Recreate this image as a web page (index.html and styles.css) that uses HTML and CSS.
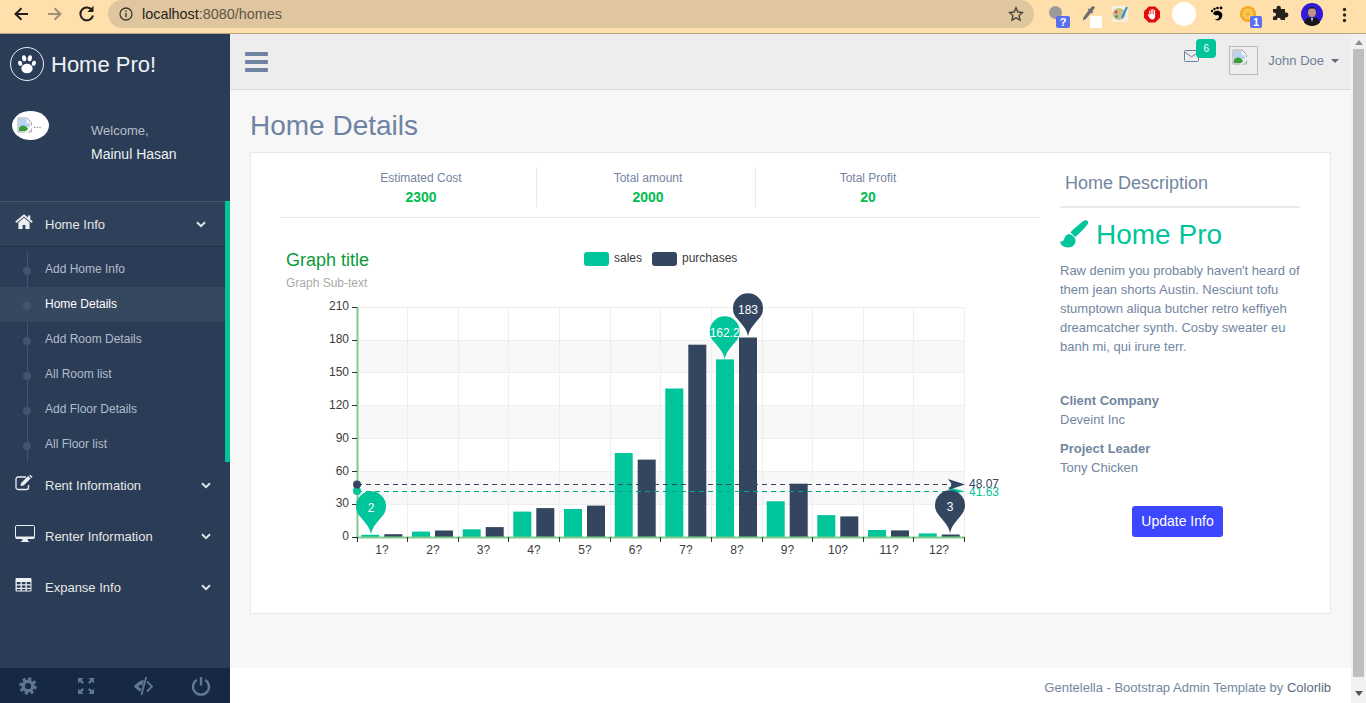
FILE: index.html
```html
<!DOCTYPE html>
<html lang="en">
<head>
<meta charset="utf-8">
<title>Home Details</title>
<link rel="stylesheet" href="styles.css">
</head>
<body>
<header class="chrome">
  <div class="chrome-nav">
    <svg class="chrome-nav-svg" viewBox="0 0 100 33" width="100" height="33">
      <path d="M28 14H16M21.5 8.2L15.5 14l6 5.8" fill="none" stroke="#231f1a" stroke-width="2"/>
      <path d="M48 14H60M54.5 8.2L60.5 14l-6 5.8" fill="none" stroke="#a08f74" stroke-width="2"/>
      <path d="M92.2 10.5A6.4 6.4 0 1 0 93 15.5" fill="none" stroke="#231f1a" stroke-width="2"/>
      <path d="M93.5 5.8V12H87.3Z" fill="#231f1a"/>
    </svg>
  </div>
  <div class="url-pill">
    <svg class="url-info" viewBox="0 0 14 14" width="14" height="14">
      <circle cx="7" cy="7" r="6" fill="none" stroke="#3d3a34" stroke-width="1.3"/>
      <rect x="6.3" y="6" width="1.4" height="4.2" fill="#3d3a34"/>
      <rect x="6.3" y="3.6" width="1.4" height="1.4" fill="#3d3a34"/>
    </svg>
    <span class="url-host">localhost</span><span class="url-rest">:8080/homes</span>
    <svg class="url-star" viewBox="0 0 16 16" width="16" height="16">
      <path d="M8 1.8l1.9 4.2 4.6.5-3.4 3.1.9 4.5L8 11.8l-4 2.3.9-4.5L1.5 6.5l4.6-.5z" fill="none" stroke="#4a453d" stroke-width="1.4"/>
    </svg>
  </div>
  <svg class="ext-svg" viewBox="1034 0 332 33" width="332" height="33">
    <circle cx="1055.5" cy="12.5" r="6.5" fill="#9a9a98"/>
    <rect x="1056" y="16" width="14" height="12" rx="2" fill="#5a6ef0"/>
    <text x="1063" y="26" class="ext-badge">?</text>
    <path d="M1095 7.5c-1-1.6-3-1.6-4 0l-1.2 1.5-1-.6-1.2 1.4 1 .8-5 6.4-.8 3.4 3-1.4 5.2-6.2 1 .8 1.3-1.4-.9-1z" fill="#6b6d70"/>
    <rect x="1090" y="16" width="12" height="12" rx="1.5" fill="#fff"/>
    <rect x="1112" y="6" width="16" height="16" fill="#f3efe2"/>
    <ellipse cx="1119" cy="14" rx="6.5" ry="6" fill="#c9bf94"/>
    <circle cx="1116" cy="12" r="1.5" fill="#d24a3a"/>
    <circle cx="1120" cy="10.5" r="1.3" fill="#e5b93b"/>
    <circle cx="1116.5" cy="16.5" r="1.4" fill="#4a9d50"/>
    <path d="M1127 7l-5 11" stroke="#2b8fd0" stroke-width="2"/>
    <path d="M1148.7 6.5h6.6l4.7 4.7v6.6l-4.7 4.7h-6.6l-4.7-4.7v-6.6z" fill="#e20e0e"/>
    <path d="M1149 11h1v3h.6V9.5h1.1V14h.6V9h1.1v5h.6V10h1.1v6.5c0 2-1.2 3-2.8 3-1.5 0-2.3-.8-3-2l-1.6-2.8 1-.5.9 1.3z" fill="#fff"/>
    <circle cx="1184" cy="14" r="12" fill="#fff"/>
    <path d="M1213 14c0-2 3-4 6-3 3 1 4 3 3 6-1 3-4 4-6 3l-1-1c2 .5 4-.5 4-2.5 0-1.5-2-2-3-1z" fill="#000"/>
    <circle cx="1212" cy="11" r="1.2" fill="#000"/><circle cx="1214.5" cy="9" r="1.2" fill="#000"/><circle cx="1217.5" cy="8" r="1.3" fill="#000"/><circle cx="1221" cy="8" r="1.4" fill="#000"/>
    <circle cx="1248" cy="14" r="8" fill="#f5a623"/>
    <circle cx="1248" cy="14" r="5.5" fill="#ffd25e"/>
    <path d="M1248 8.5v11M1242.5 14h11M1244 10l8 8M1252 10l-8 8" stroke="#f5a623" stroke-width=".8"/>
    <rect x="1250" y="16" width="12" height="12" rx="2" fill="#5a6ef0"/>
    <text x="1256" y="26" class="ext-badge">1</text>
    <path d="M1273 11h3.5v-1a2.2 2.2 0 0 1 4.4 0v1h4.1v3.6h1a2.4 2.4 0 0 1 0 4.8h-1V22h-4.4v-1a1.9 1.9 0 0 0-3.6 0v1H1273v-3.500h1a2 2 0 0 0 0-4H1273z" fill="#26221c" transform="translate(0 -2)"/>
    <circle cx="1312" cy="14" r="11" fill="#2f1bd8"/>
    <ellipse cx="1312" cy="12.5" rx="4" ry="5" fill="#c09478"/>
    <path d="M1308 10c0-4 8-4 8 0l-1-1.5h-6z" fill="#14110f"/>
    <path d="M1304 22.5c1-4 4-5 8-5s7 1 8 5a11 11 0 0 1-16 0z" fill="#15151b"/>
    <path d="M1311 18h2l-1 4z" fill="#eee"/>
    <circle cx="1344.5" cy="9.5" r="1.7" fill="#2b2620"/><circle cx="1344.5" cy="15" r="1.7" fill="#2b2620"/><circle cx="1344.5" cy="20.5" r="1.7" fill="#2b2620"/>
  </svg>
</header>

<div class="app">
  <aside class="sidebar">
    <div class="brand">
      <span class="brand-circle">
        <svg viewBox="0 0 34 34" width="26" height="26">
          <ellipse cx="17" cy="23" rx="7.4" ry="6.2" fill="#fff"/>
          <ellipse cx="8" cy="16" rx="2.6" ry="3.4" fill="#fff" transform="rotate(-20 8 16)"/>
          <ellipse cx="13.3" cy="9.5" rx="2.8" ry="3.9" fill="#fff" transform="rotate(-8 13.3 9.5)"/>
          <ellipse cx="20.7" cy="9.5" rx="2.8" ry="3.9" fill="#fff" transform="rotate(8 20.7 9.5)"/>
          <ellipse cx="26" cy="16" rx="2.6" ry="3.4" fill="#fff" transform="rotate(20 26 16)"/>
        </svg>
      </span>
      <span class="brand-name">Home Pro!</span>
    </div>
    <div class="profile">
      <div class="profile-pic">
        <svg class="broken-small" viewBox="0 0 16 16" width="16" height="16">
          <path d="M1 1h9l4.500 4.500V15H1z" fill="#f4f6f8" stroke="#a3a6ab" stroke-width="1"/>
          <path d="M2 2h7.500v4.200h3.500V10H2z" fill="#b9d2f3"/>
          <path d="M2 14V10.500c3-3 6-2.500 8 0l3 3v.5z" fill="#3a9d3a"/>
          <path d="M16 8.500L8.500 16" stroke="#fff" stroke-width="2"/>
        </svg>
        <span class="alt-dots">...</span>
      </div>
      <div class="profile-info">
        <span class="welcome">Welcome,</span>
        <span class="profile-name">Mainul Hasan</span>
      </div>
    </div>
    <nav class="menu">
      <div class="group group-open">
        <div class="menu-row menu-row-active">
          <svg class="menu-icon" viewBox="0 0 18 16" width="18" height="16">
            <path d="M3.400 8.500L9 3.800l5.600 4.700V15h-4.200v-4H7.600v4H3.400z" fill="#eceff3"/>
            <path d="M.8 8.300L9 1.500l8.200 6.800" fill="none" stroke="#eceff3" stroke-width="1.800"/>
            <rect x="13" y="1.500" width="2.300" height="4" fill="#eceff3"/>
          </svg>
          <span class="menu-label">Home Info</span>
          <svg class="chev chev-open" viewBox="0 0 10 7" width="10" height="7"><path d="M1 1.200l4 4 4-4" fill="none" stroke="#dfe4ea" stroke-width="2"/></svg>
        </div>
        <ul class="sub">
          <li class="sub-item">Add Home Info</li>
          <li class="sub-item sub-item-active">Home Details</li>
          <li class="sub-item">Add Room Details</li>
          <li class="sub-item">All Room list</li>
          <li class="sub-item">Add Floor Details</li>
          <li class="sub-item">All Floor list</li>
        </ul>
      </div>
      <div class="menu-row menu-row-plain">
        <svg class="menu-icon" viewBox="0 0 18 16" width="18" height="16">
          <path d="M13.500 10v2.500a2 2 0 0 1-2 2H3a2 2 0 0 1-2-2V4a2 2 0 0 1 2-2h8" fill="none" stroke="#eceff3" stroke-width="1.300"/>
          <path d="M5.500 11l.6-3 7-7 2.500 2.500-7 7z" fill="#eceff3"/>
          <path d="M14 .6l2.600 2.500 1-1.300L15.300 0z" fill="#eceff3"/>
        </svg>
        <span class="menu-label">Rent Information</span>
        <svg class="chev" viewBox="0 0 10 7" width="10" height="7"><path d="M1 1.200l4 4 4-4" fill="none" stroke="#dfe4ea" stroke-width="2"/></svg>
      </div>
      <div class="menu-row menu-row-plain">
        <svg class="menu-icon" viewBox="0 0 20 18" width="20" height="18">
          <rect x=".5" y=".5" width="19" height="12.500" rx="1.200" fill="none" stroke="#eceff3" stroke-width="1"/>
          <rect x=".5" y="11.500" width="19" height="2.500" rx="1" fill="#eceff3"/>
          <path d="M7.500 14h5l.5 2.200h1.300V17H5.700v-.8H7z" fill="#eceff3"/>
        </svg>
        <span class="menu-label">Renter Information</span>
        <svg class="chev" viewBox="0 0 10 7" width="10" height="7"><path d="M1 1.200l4 4 4-4" fill="none" stroke="#dfe4ea" stroke-width="2"/></svg>
      </div>
      <div class="menu-row menu-row-plain">
        <svg class="menu-icon" viewBox="0 0 18 16" width="18" height="16">
          <rect x=".5" y="1" width="16" height="13.500" rx="1" fill="#eceff3"/>
          <path d="M1.800 5h3.700v2.300H1.800zM6.800 5h3.700v2.300H6.800zM11.800 5h3.700v2.300h-3.700zM1.800 8.500h3.700v2.300H1.800zM6.800 8.500h3.700v2.300H6.800zM11.800 8.500h3.700v2.300h-3.700zM1.800 12h3.700v1.500H1.800zM6.800 12h3.700v1.500H6.800zM11.800 12h3.700v1.500h-3.700z" fill="#2a3c56"/>
        </svg>
        <span class="menu-label">Expanse Info</span>
        <svg class="chev" viewBox="0 0 10 7" width="10" height="7"><path d="M1 1.200l4 4 4-4" fill="none" stroke="#dfe4ea" stroke-width="2"/></svg>
      </div>
    </nav>
    <div class="side-footer">
      <svg viewBox="0 0 20 20" width="20" height="20">
        <circle cx="10" cy="10" r="7.400" fill="none" stroke="#5f7893" stroke-width="2.800" stroke-dasharray="3.100 2.710"/>
        <circle cx="10" cy="10" r="4.800" fill="none" stroke="#5f7893" stroke-width="3.400"/>
      </svg>
      <svg viewBox="0 0 20 20" width="20" height="20">
        <path d="M2 2h5.500L5.600 3.900 8 6.300 6.300 8 3.900 5.600 2 7.500zM18 2v5.500l-1.900-1.900L13.700 8 12 6.300l2.400-2.400L12.500 2zM2 18v-5.500l1.900 1.900L6.300 12 8 13.700l-2.400 2.400L7.500 18zM18 18h-5.500l1.900-1.900L12 13.700l1.700-1.700 2.400 2.400 1.900-1.900z" fill="#5f7893"/>
      </svg>
      <svg viewBox="0 0 20 20" width="20" height="20">
        <path d="M10 4C6 5 3 7.500 1 10.500 3 13 5 14.500 7.500 15.500L11 4.500z" fill="#5f7893"/>
        <circle cx="7.500" cy="10.500" r="1.700" fill="#162844"/>
        <path d="M13.200 1L8.400 19" fill="none" stroke="#5f7893" stroke-width="1.800"/>
        <path d="M14 5.500L19 10.500 14 15.500" fill="none" stroke="#5f7893" stroke-width="1.800"/>
      </svg>
      <svg viewBox="0 0 20 20" width="20" height="20">
        <path d="M5.700 3.900a8 8 0 1 0 8.600 0" fill="none" stroke="#5f7893" stroke-width="2.400"/>
        <path d="M10 1v8.500" stroke="#5f7893" stroke-width="2.400"/>
      </svg>
    </div>
  </aside>

  <div class="main">
    <div class="topnav">
      <div class="hamburger"><span></span><span></span><span></span></div>
      <div class="nav-right">
        <div class="mail">
          <svg viewBox="0 0 15 12" width="15" height="12">
            <rect x=".5" y=".5" width="14" height="11" rx="1" fill="none" stroke="#6b7fa3" stroke-width="1"/>
            <path d="M.8 2l6.700 5 6.700-5" fill="none" stroke="#6b7fa3" stroke-width="1"/>
          </svg>
          <span class="badge">6</span>
        </div>
        <div class="nav-avatar">
          <svg viewBox="0 0 16 16" width="16" height="16">
            <path d="M1 1h9l4.500 4.500V15H1z" fill="#f4f6f8" stroke="#a3a6ab" stroke-width="1"/>
            <path d="M2 2h7.500v4.200h3.500V10H2z" fill="#b9d2f3"/>
            <path d="M2 14V10.500c3-3 6-2.500 8 0l3 3v.5z" fill="#3a9d3a"/>
            <path d="M16 8.500L8.500 16" stroke="#ededed" stroke-width="2"/>
          </svg>
        </div>
        <span class="nav-user">John Doe</span>
        <span class="caret"></span>
      </div>
    </div>

    <div class="content">
      <h1 class="page-title">Home Details</h1>
      <section class="tile">
        <div class="tile-left">
          <div class="stats">
            <div class="stat"><span class="stat-label">Estimated Cost</span><span class="stat-value">2300</span></div>
            <div class="stat stat-mid"><span class="stat-label">Total amount</span><span class="stat-value">2000</span></div>
            <div class="stat stat-last"><span class="stat-label">Total Profit</span><span class="stat-value">20</span></div>
          </div>
          <svg class="chart" viewBox="281 218 759 360" width="759" height="360">
            <text x="286" y="265.500" class="c-title">Graph title</text>
            <text x="286" y="287" class="c-sub">Graph Sub-text</text>
            <rect x="584" y="252" width="25" height="14" rx="3" class="f-green"/>
            <text x="614" y="262" class="c-text">sales</text>
            <rect x="652" y="252" width="25" height="14" rx="3" class="f-navy"/>
            <text x="682" y="262" class="c-text">purchases</text>

            <rect x="357" y="340" width="608" height="33" class="band"/>
            <rect x="357" y="405.500" width="608" height="33" class="band"/>
            <rect x="357" y="471.500" width="608" height="33" class="band"/>
            <path class="grid" d="M357 307.500H965M357 340.500H965M357 372.500H965M357 405.500H965M357 438.500H965M357 471.500H965M357 504.500H965"/>
            <path class="grid" d="M407.500 307V537M458.500 307V537M508.500 307V537M559.500 307V537M610.500 307V537M660.500 307V537M711.500 307V537M762.500 307V537M812.500 307V537M863.500 307V537M913.500 307V537M964.500 307V537"/>

            <g class="f-green">
              <rect x="361.300" y="534.800" width="18" height="2.200"/>
              <rect x="412" y="531.600" width="18" height="5.400"/>
              <rect x="462.700" y="529.300" width="18" height="7.700"/>
              <rect x="513.300" y="511.600" width="18" height="25.400"/>
              <rect x="564" y="509" width="18" height="28"/>
              <rect x="614.700" y="453" width="18" height="84"/>
              <rect x="665.300" y="388.500" width="18" height="148.500"/>
              <rect x="716" y="359.400" width="18" height="177.600"/>
              <rect x="766.700" y="501.300" width="18" height="35.700"/>
              <rect x="817.300" y="515.100" width="18" height="21.900"/>
              <rect x="868" y="530" width="18" height="7"/>
              <rect x="918.700" y="533.400" width="18" height="3.600"/>
            </g>
            <g class="f-navy">
              <rect x="384.300" y="534.200" width="18" height="2.800"/>
              <rect x="435" y="530.500" width="18" height="6.500"/>
              <rect x="485.700" y="527.100" width="18" height="9.900"/>
              <rect x="536.300" y="508.100" width="18" height="28.900"/>
              <rect x="587" y="505.600" width="18" height="31.400"/>
              <rect x="637.700" y="459.600" width="18" height="77.400"/>
              <rect x="688.300" y="344.700" width="18" height="192.300"/>
              <rect x="739" y="337.500" width="18" height="199.500"/>
              <rect x="789.700" y="483.700" width="18" height="53.300"/>
              <rect x="840.300" y="516.400" width="18" height="20.600"/>
              <rect x="891" y="530.400" width="18" height="6.600"/>
              <rect x="941.700" y="534.500" width="18" height="2.500"/>
            </g>

            <path class="axis-green" d="M357.500 307V538M356 537.500H965"/>
            <path class="tick" d="M352 307.500h5M352 340.500h5M352 372.500h5M352 405.500h5M352 438.500h5M352 471.500h5M352 504.500h5M352 537.500h5"/>
            <path class="tick" d="M357.500 537v5M407.500 537v5M458.500 537v5M508.500 537v5M559.500 537v5M610.500 537v5M660.500 537v5M711.500 537v5M762.500 537v5M812.500 537v5M863.500 537v5M913.500 537v5M964.500 537v5"/>

            <path class="dash-navy" d="M357 484.500H955"/>
            <path class="dash-green" d="M357 491.500H955"/>
            <path class="f-green" d="M948 487l17 4.500-17 3 3-3.500z"/>
            <path class="f-navy" d="M948 479l17 5.500-17 5.500 4-5.500z"/>
            <circle cx="357" cy="491" r="4" class="f-green"/>
            <circle cx="357" cy="484.500" r="4" class="f-navy"/>

            <g class="c-text c-end">
              <text x="349" y="310">210</text>
              <text x="349" y="343">180</text>
              <text x="349" y="376">150</text>
              <text x="349" y="409">120</text>
              <text x="349" y="442">90</text>
              <text x="349" y="475">60</text>
              <text x="349" y="507">30</text>
              <text x="349" y="540">0</text>
            </g>
            <g class="c-text c-mid">
              <text x="382" y="554">1?</text>
              <text x="433" y="554">2?</text>
              <text x="483.500" y="554">3?</text>
              <text x="534" y="554">4?</text>
              <text x="585" y="554">5?</text>
              <text x="635.500" y="554">6?</text>
              <text x="686" y="554">7?</text>
              <text x="737" y="554">8?</text>
              <text x="787.500" y="554">9?</text>
              <text x="838" y="554">10?</text>
              <text x="889" y="554">11?</text>
              <text x="939" y="554">12?</text>
            </g>
            <text x="969" y="495.500" class="c-label-green">41.63</text>
            <text x="969" y="488" class="c-label-navy">48.07</text>

            <path class="f-green" transform="translate(371 506)" d="M0 29C-.5 23-4 18.500-10.500 11A15 15 0 1 1 10.500 11C4 18.500.5 23 0 29Z"/>
            <path class="f-navy" transform="translate(950 505)" d="M0 29C-.5 23-4 18.500-10.500 11A15 15 0 1 1 10.500 11C4 18.500.5 23 0 29Z"/>
            <path class="f-green" transform="translate(724.700 331)" d="M0 29C-.5 23-4 18.500-10.500 11A15 15 0 1 1 10.500 11C4 18.500.5 23 0 29Z"/>
            <path class="f-navy" transform="translate(748 308)" d="M0 29C-.5 23-4 18.500-10.500 11A15 15 0 1 1 10.500 11C4 18.500.5 23 0 29Z"/>
            <g class="c-pin">
              <text x="371" y="511.500">2</text>
              <text x="950" y="511">3</text>
              <text x="724.700" y="336.500">162.2</text>
              <text x="748" y="313.500">183</text>
            </g>
          </svg>
        </div>
        <div class="tile-right">
          <h3 class="desc-head">Home Description</h3>
          <h2 class="desc-brand">
            <svg class="brush" viewBox="0 0 28 28" width="28" height="28">
              <path d="M27.800 1.200c-1-1.200-3-1.200-4.500-.2-3.500 2.700-10 8-12.800 11.500l4.500 4.500C18.500 14.500 25 8 27.800 4c.6-.9.6-2 0-2.800z" class="f-green"/>
              <path d="M9.500 14c-3.300.3-4.800 2.800-5.400 5.300-.4 1.700-2 2.700-4.100 2.500.5 3 3.500 5.700 8 5.700 4.800 0 8-3.400 7.500-7.500-.2-2-2.500-4.500-6-6z" class="f-green"/>
            </svg>
            <span>Home Pro</span>
          </h2>
          <p class="desc-text">Raw denim you probably haven't heard of them jean shorts Austin. Nesciunt tofu stumptown aliqua butcher retro keffiyeh dreamcatcher synth. Cosby sweater eu banh mi, qui irure terr.</p>
          <dl class="facts">
            <dt>Client Company</dt>
            <dd>Deveint Inc</dd>
            <dt>Project Leader</dt>
            <dd>Tony Chicken</dd>
          </dl>
          <div class="actions"><button class="btn" type="button">Update Info</button></div>
        </div>
      </section>
    </div>

    <footer class="page-footer">Gentelella - Bootstrap Admin Template by&nbsp;<span class="footer-link">Colorlib</span></footer>
  </div>

  <div class="scrollbar">
    <span class="arrow-up"></span>
    <span class="thumb"></span>
    <span class="arrow-down"></span>
  </div>
</div>
</body>
</html>
```

FILE: styles.css
```css
* { box-sizing: border-box; }
html, body { margin: 0; padding: 0; height: 100%; overflow: hidden; }
body {
  display: flex;
  flex-direction: column;
  font-family: "Liberation Sans", Arial, sans-serif;
  font-size: 13px;
  color: #73869f;
  background: #f7f7f7;
}

/* browser chrome */
.chrome {
  flex: 0 0 34px;
  min-height: 0;
  overflow: hidden;
  display: flex;
  background: #ffdfac;
  border-bottom: 1px solid #b8a281;
}
.chrome-nav { flex: 0 0 108px; }
.chrome-nav-svg { display: block; }
.url-pill {
  flex: 0 0 926px;
  height: 28px;
  display: flex;
  align-items: center;
  padding: 0 10px 0 11px;
  border-radius: 14px;
  background: #e0c69e;
  font-size: 14.4px;
}
.url-info { margin-right: 9px; }
.url-host { color: #26221c; }
.url-rest { color: #5d5648; }
.url-star { margin-left: auto; }
.ext-svg { display: block; flex: 0 0 332px; }
.ext-badge { font-size: 11px; font-weight: 700; fill: #fff; text-anchor: middle; }

/* layout */
.app { flex: 1; display: flex; min-height: 0; }
.sidebar {
  flex: 0 0 230px;
  display: flex;
  flex-direction: column;
  background: #2a3c56;
  color: #ecf0f1;
}
.brand { height: 62px; display: flex; align-items: center; padding: 0 0 2px 10px; }
.brand-circle {
  width: 34px;
  height: 34px;
  border: 1px solid #eaeef2;
  border-radius: 50%;
  display: flex;
  align-items: center;
  justify-content: center;
}
.brand-name { margin: 2px 0 0 7px; font-size: 22px; color: #eef2f6; }
.profile { height: 105px; padding-top: 15px; display: flex; }
.profile-pic {
  margin-left: 12px;
  width: 37px;
  height: 29px;
  border-radius: 50%;
  background: #fff;
  display: flex;
  align-items: center;
  padding: 0 0 2px 5px;
}
.broken-small { flex: none; }
.alt-dots { font-size: 10px; color: #666; line-height: 1; }
.profile-info { margin: 12px 0 0 42px; display: flex; flex-direction: column; }
.welcome { color: #b5bec9; font-size: 13px; line-height: 16px; }
.profile-name { margin-top: 6px; color: #ecf0f1; font-size: 14px; line-height: 18px; }

.menu { flex: 1; }
.group-open { border-right: 5px solid #00c49a; height: 261px; margin-bottom: -2px; }
.menu-row { display: flex; align-items: center; color: #e7e7e7; }
.menu-row-active {
  height: 46px;
  padding-left: 15px;
  background: #2f415a;
  border-top: 1px solid #48566c;
  border-bottom: 1px solid #1f2d42;
}
.menu-row-plain { height: 51px; padding-left: 15px; }
.menu-icon { flex: none; margin-top: -5px; }
.menu-label { margin-left: 12px; flex: 1; }
.menu-row-plain:nth-child(3) .menu-label { margin-left: 10px; }
.chev { flex: none; margin-right: 19px; }
.chev-open { margin-right: 19px; }
.sub {
  list-style: none;
  margin: 0;
  padding: 5px 0 0;
  background: linear-gradient(#2d3f58 0, #2a3c56 10px);
  position: relative;
}
.sub::before {
  content: "";
  position: absolute;
  left: 27px;
  top: 5px;
  bottom: 0;
  width: 1px;
  background: #425570;
}
.sub-item {
  height: 35px;
  line-height: 35px;
  padding-left: 45px;
  font-size: 12px;
  color: #b3bdcb;
  position: relative;
}
.sub-item::before {
  content: "";
  position: absolute;
  left: 23px;
  top: 15px;
  width: 8px;
  height: 8px;
  border-radius: 50%;
  background: #425570;
}
.sub-item-active { background: #354860; color: #fff; }
.side-footer {
  height: 35px;
  flex: none;
  padding: 0 19px 0 18px;
  display: flex;
  align-items: center;
  justify-content: space-between;
  background: #162844;
}

.main { flex: 1; min-width: 0; display: flex; flex-direction: column; }
.topnav {
  flex: 0 0 56px;
  display: flex;
  align-items: center;
  background: #ededed;
  border-bottom: 1px solid #d9dee4;
  padding: 0 0 0 15px;
}
.hamburger { width: 23px; display: flex; flex-direction: column; gap: 4px; margin-top: 1px; }
.hamburger span { display: block; height: 4px; border-radius: 1px; background: #6f84a3; }
.nav-right { margin-left: auto; display: flex; align-items: center; padding-right: 12px; margin-top: -2px; }
.mail { position: relative; width: 15px; height: 12px; margin: -10px 30px 0 0; }
.mail svg { display: block; }
.badge {
  position: absolute;
  left: 12px;
  top: -11px;
  width: 20px;
  height: 19px;
  line-height: 19px;
  text-align: center;
  font-size: 10px;
  color: #fff;
  border-radius: 4px;
  background: #00c49a;
}
.nav-avatar {
  width: 29px;
  height: 29px;
  padding: 2px;
  border: 1px solid #bcbcbc;
}
.nav-avatar svg { display: block; }
.nav-user { margin-left: 10px; color: #6e7f96; font-size: 13px; }
.caret {
  margin-left: 7px;
  border-top: 4px solid #5e6b7c;
  border-left: 4px solid transparent;
  border-right: 4px solid transparent;
}

.content { flex: 1; padding: 0 20px 0 20px; min-height: 0; }
.page-title {
  margin: 0;
  padding-top: 19px;
  height: 62px;
  line-height: 33px;
  font-size: 28px;
  font-weight: 400;
  color: #6e83a3;
}
.tile {
  display: flex;
  height: 462px;
  background: #fff;
  border: 1px solid #e6e9ed;
  padding: 14px 30px 0 30px;
}
.tile-left { flex: 0 0 759px; }
.stats {
  display: grid;
  grid-template-columns: 256px 219px 1fr;
  box-sizing: content-box;
  height: 40px;
  padding-bottom: 10px;
  border-bottom: 1px solid #e6e9ed;
}
.stat {
  display: flex;
  flex-direction: column;
  align-items: center;
  padding-left: 25px;
  border-right: 1px solid #e6e9ed;
}
.stat-mid { padding-left: 4px; }
.stat-last { border-right: 0; padding: 0 60px 0 0; }
.stat-label { font-size: 12px; line-height: 22px; }
.stat-value { font-size: 14px; font-weight: 700; line-height: 17px; color: #00bd50; }
.chart { display: block; }
.c-title { font-size: 18px; fill: #0b9a3a; }
.c-sub { font-size: 12px; fill: #aaa; }
.c-text { font-size: 12px; fill: #3c3c3c; }
.c-end { text-anchor: end; }
.c-mid { text-anchor: middle; }
.c-label-green { font-size: 12px; fill: #00c49a; }
.c-label-navy { font-size: 12px; fill: #34465f; }
.c-pin { font-size: 12px; fill: #fff; text-anchor: middle; }
.f-green { fill: #00c49a; }
.f-navy { fill: #34465f; }
.band { fill: #f8f8f8; }
.grid { fill: none; stroke: #eee; stroke-width: 1; }
.axis-green { fill: none; stroke: #7fcb8f; stroke-width: 2; }
.tick { fill: none; stroke: #333; stroke-width: 1; }
.dash-navy { fill: none; stroke: #34465f; stroke-width: 1; stroke-dasharray: 5 4; }
.dash-green { fill: none; stroke: #00a888; stroke-width: 1; stroke-dasharray: 5 4; }

.tile-right { flex: 0 0 240px; margin-left: 20px; }
.desc-head {
  margin: 0;
  height: 41px;
  padding-left: 5px;
  font-size: 18px;
  font-weight: 400;
  line-height: 32px;
  color: #73869f;
  border-bottom: 2px solid #e6e9ed;
}
.desc-brand {
  margin: 11px 0 0;
  display: flex;
  align-items: center;
  gap: 8px;
  font-size: 28px;
  font-weight: 400;
  line-height: 32px;
  color: #00c49a;
}
.brush { margin-top: -2px; }
.desc-text { margin: 10px 0 0; line-height: 19px; font-size: 13px; }
.facts { margin: 35px 0 0; }
.facts dt { font-weight: 700; line-height: 19px; }
.facts dd { margin: 0 0 10px; line-height: 19px; }
.actions { margin-top: 29px; padding-left: 72px; }
.btn {
  display: block;
  width: 91px;
  height: 31px;
  padding: 0 0 2px;
  border: 0;
  border-radius: 3px;
  background: #3d47ff;
  color: #fff;
  font-family: inherit;
  font-size: 14px;
}
.page-footer {
  flex: 0 0 35px;
  display: flex;
  align-items: center;
  justify-content: flex-end;
  padding: 4px 20px 0 0;
  background: #fff;
  font-size: 13px;
}
.footer-link { color: #5a6a80; }

.scrollbar {
  flex: 0 0 15px;
  display: flex;
  flex-direction: column;
  align-items: center;
  background: #f1f1f1;
}
.arrow-up {
  margin-top: 6px;
  border-bottom: 5px solid #8f8f8f;
  border-left: 4px solid transparent;
  border-right: 4px solid transparent;
}
.thumb { width: 11px; height: 628px; margin-top: 4px; background: #bebebe; }
.arrow-down {
  margin-top: 14px;
  border-top: 5px solid #555;
  border-left: 4px solid transparent;
  border-right: 4px solid transparent;
}
```
